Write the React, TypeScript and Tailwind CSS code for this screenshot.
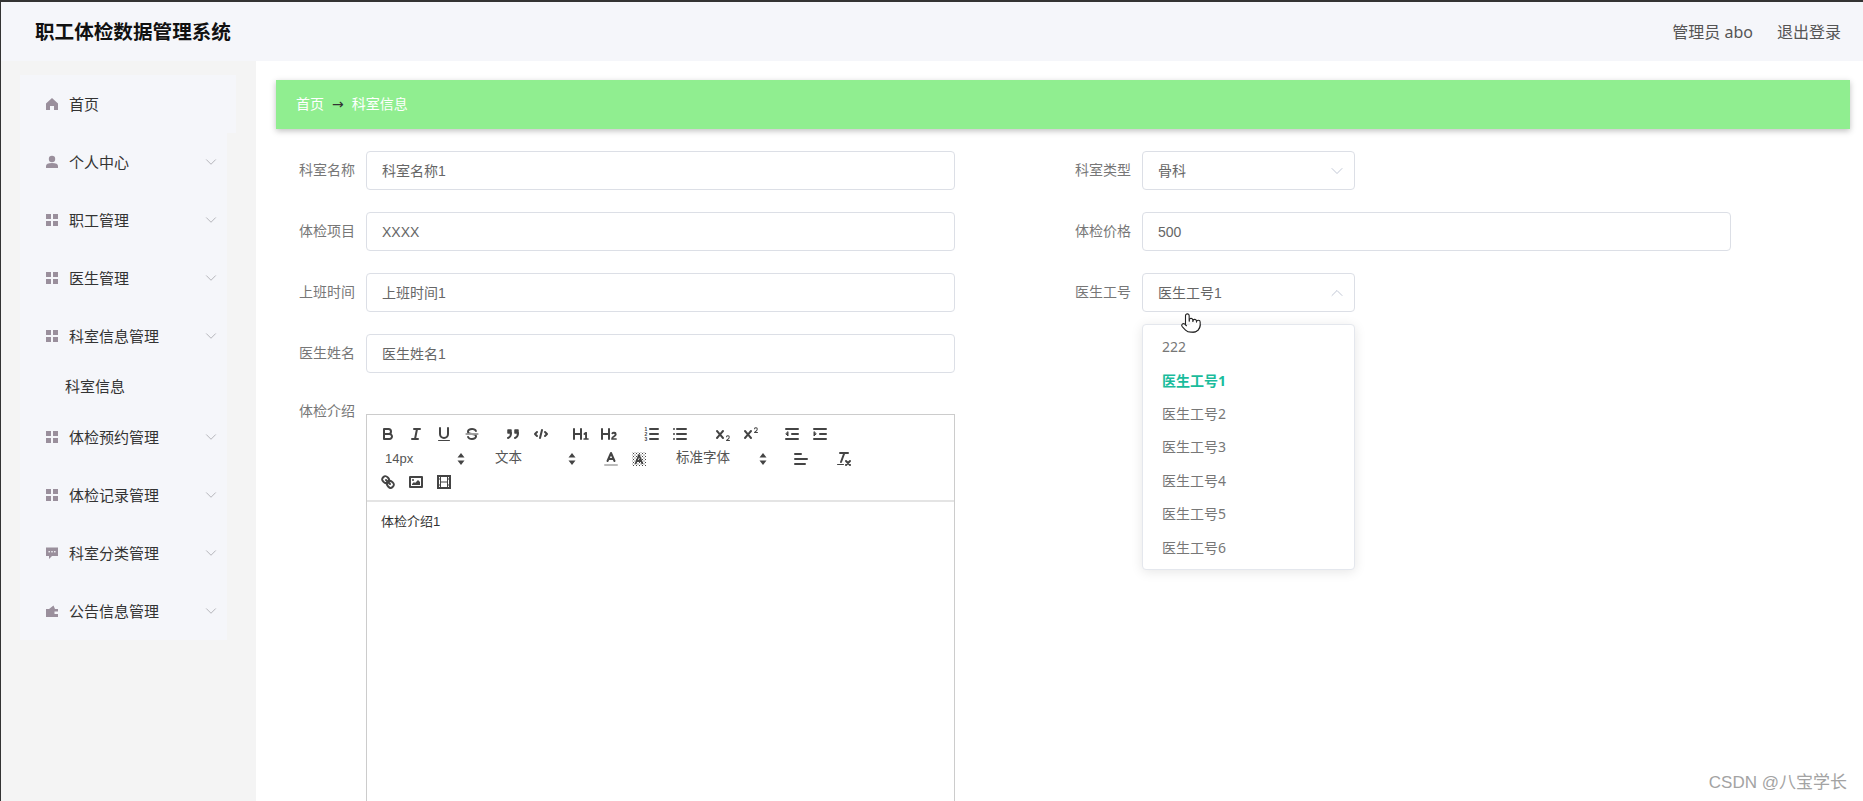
import type { ReactNode } from 'react'
import { ChevronDown, ChevronUp, Pointer } from 'lucide-react'

const FONT = "font-['Noto_Sans','Noto_Sans_CJK_SC',sans-serif]"
const FORM_FONT = "font-['Liberation_Sans','Noto_Sans_CJK_SC',sans-serif]"

const HomeIcon = () => (
  <svg width="14" height="14" viewBox="0 0 14 14" fill="#9a8f9c">
    <path d="M7 1 L13 6.5 V13 H9 V9 H5 V13 H1 V6.5 Z" />
  </svg>
)
const UserIcon = () => (
  <svg width="14" height="14" viewBox="0 0 14 14" fill="#9a8f9c">
    <circle cx="7" cy="4" r="3.2" />
    <path d="M1 13 V11 C1 9 3 8 7 8 C11 8 13 9 13 11 V13 Z" />
  </svg>
)
const GridIcon = () => (
  <svg width="14" height="14" viewBox="0 0 14 14" fill="#9a8f9c">
    <rect x="1" y="1" width="5" height="5" />
    <rect x="8" y="1" width="5" height="5" />
    <rect x="1" y="8" width="5" height="5" />
    <rect x="8" y="8" width="5" height="5" />
  </svg>
)
const ChatIcon = () => (
  <svg width="14" height="14" viewBox="0 0 14 14">
    <path d="M1 1.5 H13 V10 H7 L4 13 V10 H1 Z" fill="#9a8f9c" />
    <rect x="3.5" y="5" width="1.4" height="1.4" fill="#f5f6fa" />
    <rect x="6.3" y="5" width="1.4" height="1.4" fill="#f5f6fa" />
    <rect x="9.1" y="5" width="1.4" height="1.4" fill="#f5f6fa" />
  </svg>
)
const WalletIcon = () => (
  <svg width="14" height="14" viewBox="0 0 14 14">
    <path d="M1 5 H4 L8.5 1.5 L10 5 H13 V13 H1 Z" fill="#9a8f9c" />
    <rect x="9.5" y="7.5" width="3.5" height="2.5" fill="#f5f6fa" />
  </svg>
)

const menu = [
  { label: '个人中心', icon: <UserIcon /> },
  { label: '职工管理', icon: <GridIcon /> },
  { label: '医生管理', icon: <GridIcon /> },
  { label: '科室信息管理', icon: <GridIcon />, sub: '科室信息' },
  { label: '体检预约管理', icon: <GridIcon /> },
  { label: '体检记录管理', icon: <GridIcon /> },
  { label: '科室分类管理', icon: <ChatIcon /> },
  { label: '公告信息管理', icon: <WalletIcon /> },
]

const Sidebar = () => (
  <aside className="w-[255px] shrink-0 bg-[#f4f4f4] pl-[19px] pt-[14px]">
    <div className="w-[207px] bg-[#f5f6fa]">
      <div className="flex h-[58px] w-[216px] items-center gap-[10px] bg-[#f5f6fa] pl-[25px] text-[15px] text-[#333]">
        <HomeIcon />
        <span>首页</span>
      </div>
      {menu.map(item => (
        <div key={item.label}>
          <div className="flex h-[58px] items-center gap-[10px] pl-[25px] pr-[7px] text-[15px] text-[#333]">
            {item.icon}
            <span className="flex-1">{item.label}</span>
            <ChevronDown size={18} strokeWidth={1.1} color="#a6a6ad" />
          </div>
          {item.sub && <div className="flex h-[43px] items-center pl-[45px] text-[15px] text-[#333]">{item.sub}</div>}
        </div>
      ))}
    </div>
  </aside>
)

const Field = ({ label, value, width, arrow }: { label: string; value: string; width: string; arrow?: 'up' | 'down' }) => (
  <div className="flex h-[39px] items-center">
    <label className="w-[59px] shrink-0 pl-[3px] text-[14px] text-[#777]">{label}</label>
    <div className={`ml-[11px] flex h-[39px] items-center justify-between rounded-[4px] border border-[#dcdfe6] pl-[15px] pr-[7px] text-[14px] text-[#666] ${width}`}>
      <span className="pt-[1px]">{value}</span>
      {arrow === 'down' && <ChevronDown size={20} strokeWidth={1} color="#b4bccc" />}
      {arrow === 'up' && <ChevronUp size={20} strokeWidth={1} color="#b4bccc" />}
    </div>
  </div>
)

// editor toolbar icon, 28px wide slot with an 18x18 drawing
const ToolIcon = ({ children, className = '' }: { children: ReactNode; className?: string }) => (
  <span className={`flex h-[20px] w-[28px] shrink-0 items-center justify-center ${className}`}>
    <svg width="18" height="18" viewBox="0 0 18 18" fill="none" stroke="#444" strokeWidth="2" strokeLinecap="round" strokeLinejoin="round">
      {children}
    </svg>
  </span>
)

const Updown = () => (
  <svg width="8" height="12" viewBox="0 0 8 12" fill="#444">
    <path d="M4 0 L7.5 4.5 H0.5 Z M4 12 L0.5 7.5 H7.5 Z" />
  </svg>
)

const X_PATH = 'M9.65,5.241a1,1,0,0,0-1.409.108L6,7.964,3.759,5.349A1,1,0,0,0,2.241,6.651L4.684,9.5,2.241,12.35A1,1,0,0,0,3.759,13.65L6,11.036,8.241,13.65a1,1,0,1,0,1.518-1.3L7.316,9.5,9.759,6.651A1,1,0,0,0,9.65,5.241Z'

const Editor = () => (
  <div className="ml-[11px] h-[420px] w-[589px] border border-[#ccc]">
    <div className={`${FORM_FONT} h-[87px] border-b-2 border-[#e4e4e4] pl-[7px] pt-[7px]`}>
      <div className="flex h-[24px] items-center">
        <ToolIcon>
          <path d="M5,4H9.5A2.5,2.5,0,0,1,12,6.5v0A2.5,2.5,0,0,1,9.5,9H5V4Z" />
          <path d="M5,9h5.5A2.5,2.5,0,0,1,13,11.5v0A2.5,2.5,0,0,1,10.5,14H5V9Z" />
        </ToolIcon>
        <ToolIcon>
          <path d="M7 4H13M5 14H11M8 14L10 4" />
        </ToolIcon>
        <ToolIcon>
          <path d="M5,3V9a4,4,0,0,0,4,4h0a4,4,0,0,0,4-4V3" />
          <rect x="3" y="15" width="12" height="1" rx=".5" fill="#444" stroke="none" />
        </ToolIcon>
        <ToolIcon>
          <path d="M3 9H15" strokeWidth="1" />
          <path stroke="none" fill="#444" d="M9.007,8C6.542,7.791,6,7.519,6,6.5,6,5.792,7.283,5,9,5c1.571,0,2.765.679,2.969,1.309a1,1,0,0,0,1.9-.617C13.356,4.106,11.354,3,9,3,6.2,3,4,4.538,4,6.5a3.2,3.2,0,0,0,.5,1.843Z" />
          <path stroke="none" fill="#444" d="M8.984,10C11.457,10.208,12,10.479,12,11.5c0,.708-1.283,1.5-3,1.5-1.571,0-2.765-.679-2.969-1.309a1,1,0,1,0-1.9.617C4.644,13.894,6.646,15,9,15c2.8,0,5-1.538,5-3.5a3.2,3.2,0,0,0-.5-1.843Z" />
        </ToolIcon>
        <ToolIcon className="ml-[13px]">
          <rect x="4" y="5" width="3" height="3" fill="#444" strokeWidth="1.5" />
          <rect x="11" y="5" width="3" height="3" fill="#444" strokeWidth="1.5" />
          <path d="M7,8c0,4-3,5-3,5M14,8c0,4-3,5-3,5" />
        </ToolIcon>
        <ToolIcon>
          <path d="M5 7L3 9L5 11M13 7L15 9L13 11M10 5L8 13" />
        </ToolIcon>
        <ToolIcon className="ml-[12px]">
          <path stroke="none" fill="#444" d="M10,4V14a1,1,0,0,1-2,0V10H3v4a1,1,0,0,1-2,0V4a1,1,0,0,1,2,0V8H8V4a1,1,0,0,1,2,0Zm6.06787,9.209H14.98975V7.59863a.54085.54085,0,0,0-.605-.60547h-.62744a1.01119,1.01119,0,0,0-.748.29688L11.645,8.56641a.5435.5435,0,0,0-.022.8584l.28613.30762a.53861.53861,0,0,0,.84717.0332l.09912-.08789a1.2137,1.2137,0,0,0,.2417-.35254h.02246s-.01123.30859-.01123.60547V13.209H12.041a.54085.54085,0,0,0-.605.60547v.43945a.54085.54085,0,0,0,.605.60547h4.02686a.54085.54085,0,0,0,.605-.60547v-.43945A.54085.54085,0,0,0,16.06787,13.209Z" />
        </ToolIcon>
        <ToolIcon>
          <path stroke="none" fill="#444" d="M16.73975,13.81445v.43945a.54085.54085,0,0,1-.605.60547H11.855a.58392.58392,0,0,1-.64893-.60547V14.0127c0-2.90527,3.39941-3.42187,3.39941-4.55469a.77675.77675,0,0,0-.84717-.78125,1.17684,1.17684,0,0,0-.83594.38477c-.2749.26367-.561.374-.85791.13184l-.4292-.34082c-.30811-.24219-.38525-.51758-.1543-.81445a2.97155,2.97155,0,0,1,2.45361-1.17676,2.45393,2.45393,0,0,1,2.68408,2.40918c0,2.45312-3.1792,2.92676-3.27832,3.93848h2.79443A.54085.54085,0,0,1,16.73975,13.81445ZM9,3A.99974.99974,0,0,0,8,4V8H3V4A1,1,0,0,0,1,4V14a1,1,0,0,0,2,0V10H8v4a1,1,0,0,0,2,0V4A.99974.99974,0,0,0,9,3Z" />
        </ToolIcon>
        <ToolIcon className="ml-[15px]">
          <path d="M7 4H15M7 9H15M7 14H15" />
          <text x="1.5" y="6" fontSize="5" fill="#444" stroke="none" fontWeight="700">1</text>
          <text x="1.5" y="11" fontSize="5" fill="#444" stroke="none" fontWeight="700">2</text>
          <text x="1.5" y="16" fontSize="5" fill="#444" stroke="none" fontWeight="700">3</text>
        </ToolIcon>
        <ToolIcon>
          <path d="M6 4H15M6 9H15M6 14H15M3 4H3M3 9H3M3 14H3" />
        </ToolIcon>
        <ToolIcon className="ml-[15px]">
          <path stroke="none" fill="#444" d={X_PATH} />
          <path stroke="none" fill="#444" d="M15.5,15H13.861a3.858,3.858,0,0,0,1.914-2.975,1.8,1.8,0,0,0-1.6-1.751A1.921,1.921,0,0,0,12.021,11.7a.5.5,0,1,0,.957.291.914.914,0,0,1,1.053-.725.81.81,0,0,1,.744.762c0,1.076-1.17,1.87-1.94,2.431A1.456,1.456,0,0,0,12,15.5a.5.5,0,0,0,.5.5h3A.5.5,0,0,0,15.5,15Z" />
        </ToolIcon>
        <ToolIcon>
          <path stroke="none" fill="#444" d={X_PATH} />
          <path stroke="none" fill="#444" d="M15.5,7H13.861a4.015,4.015,0,0,0,1.914-2.975,1.8,1.8,0,0,0-1.6-1.751A1.922,1.922,0,0,0,12.021,3.7a.5.5,0,1,0,.957.291.917.917,0,0,1,1.053-.725.81.81,0,0,1,.744.762c0,1.077-1.164,1.925-1.934,2.486A1.423,1.423,0,0,0,12,7.5a.5.5,0,0,0,.5.5h3A.5.5,0,0,0,15.5,7Z" />
        </ToolIcon>
        <ToolIcon className="ml-[13px]">
          <path d="M3 14H15M3 4H15M9 9H15" />
          <path d="M5 7V11L3 9Z" fill="#444" strokeWidth="1" />
        </ToolIcon>
        <ToolIcon>
          <path d="M3 14H15M3 4H15M9 9H15" />
          <path d="M3 7V11L5 9Z" fill="#444" strokeWidth="1" />
        </ToolIcon>
      </div>
      <div className="flex h-[25px] items-center text-[13px] text-[#555]">
        <span className="flex w-[91px] items-center justify-between pl-[11px]">14px <Updown /></span>
        <span className="ml-[30px] flex w-[81px] items-center justify-between text-[13.5px]">文本 <Updown /></span>
        <ToolIcon className="ml-[21px]">
          <path d="M3 15H15" stroke="#bbb" />
          <path d="M5.5 11L9 3L12.5 11M11.6 9H6.4" />
        </ToolIcon>
        <ToolIcon>
          <defs>
            <pattern id="bg-hatch" width="3" height="3" patternUnits="userSpaceOnUse">
              <rect width="1" height="1" fill="#444" stroke="none" />
              <rect x="1.5" y="1.5" width="1" height="1" fill="#444" stroke="none" />
            </pattern>
          </defs>
          <rect x="2" y="2" width="14" height="14" fill="url(#bg-hatch)" stroke="none" />
          <path d="M5.5 14L9 5L12.5 14M11.6 11H6.4" strokeWidth="1.8" strokeLinecap="butt" />
        </ToolIcon>
        <span className="ml-[23px] flex w-[91px] items-center justify-between text-[13.5px]">标准字体 <Updown /></span>
        <ToolIcon className="ml-[20px]">
          <path d="M3 9H15M3 14H13M3 4H9" />
        </ToolIcon>
        <ToolIcon className="ml-[15px]">
          <path d="M5 3H13M6 12L9.35 3M11 11L15 15M15 11L11 15" />
          <rect x="2" y="14" width="7" height="1" rx=".5" fill="#444" stroke="none" />
        </ToolIcon>
      </div>
      <div className="flex h-[21px] items-center">
        <ToolIcon>
          <path d="M7 7L11 11" />
          <path d="M8.9,4.577a3.476,3.476,0,0,1,.36,4.679A3.476,3.476,0,0,1,4.577,8.9C3.185,7.5,2.035,6.4,4.217,4.217S7.5,3.185,8.9,4.577Z" />
          <path d="M13.423,9.1a3.476,3.476,0,0,0-4.679-.36,3.476,3.476,0,0,0,.36,4.679c1.392,1.392,2.5,2.542,4.679.36S14.815,10.5,13.423,9.1Z" />
        </ToolIcon>
        <ToolIcon>
          <rect x="3" y="4" width="12" height="10" />
          <circle cx="6" cy="7" r="1" fill="#444" stroke="none" />
          <path d="M5 12V11L7 9L8 10L11 7L13 9V12Z" fill="#444" stroke="none" />
        </ToolIcon>
        <ToolIcon>
          <rect x="3" y="3" width="12" height="12" strokeLinejoin="miter" />
          <path d="M5.5 3V15M12.5 3V15M5 9H13M3 6H5M3 12H5M13 6H15M13 12H15" strokeWidth="1" strokeLinecap="butt" />
        </ToolIcon>
      </div>
    </div>
    <div className="px-[14px] pt-[10px] text-[13px] text-[#333]">体检介绍1</div>
  </div>
)

const options = ['222', '医生工号1', '医生工号2', '医生工号3', '医生工号4', '医生工号5', '医生工号6']

const Dropdown = () => (
  <div className={`${FONT} absolute left-[70px] top-[51px] z-10 w-[213px] rounded-[4px] border border-[#e4e7ed] bg-white py-[5px] shadow-[0_2px_12px_rgba(0,0,0,0.1)]`}>
    {options.map((o, i) => (
      <div
        key={o}
        className={`flex h-[33.4px] items-center pl-[19px] text-[14px] ${i === 1 ? 'font-bold text-[#1abc9c]' : 'text-[#777]'}`}
      >
        {o}
      </div>
    ))}
  </div>
)

export default function App() {
  return (
    <div className={`${FONT} relative flex h-[801px] w-[1863px] flex-col overflow-hidden border-l border-[#333] border-t-2 border-t-[#333] bg-white`}>
      <span className="absolute -top-[2px] left-[1823px] h-[2px] w-[16px] rounded-b-full bg-[#ddd]" />
      <header className="flex h-[59px] shrink-0 items-center justify-between bg-[#f5f6fa] pl-[34px] pr-[22px]">
        <h1 className="text-[19.6px] font-bold text-[#111]">职工体检数据管理系统</h1>
        <div className="flex items-center gap-[24px] text-[16px] text-[#555]">
          <span>管理员 abo</span>
          <span>退出登录</span>
        </div>
      </header>
      <div className="flex flex-1 overflow-hidden">
        <Sidebar />
        <main className={`${FORM_FONT} flex-1 pl-[20px] pr-[13px] pt-[19px]`}>
          <div className="flex h-[49px] items-center gap-[8px] bg-[#90ee90] pl-[20px] text-[14px] text-white shadow-[0_2px_6px_rgba(0,0,0,0.25)]">
            <span>首页</span>
            <span className="font-['DejaVu_Sans',sans-serif] text-[#333]">→</span>
            <span>科室信息</span>
          </div>
          <div className="mt-[22px] flex pl-[20px]">
            <div className="flex w-[776px] flex-col gap-[22px]">
              <Field label="科室名称" value="科室名称1" width="w-[589px]" />
              <Field label="体检项目" value="XXXX" width="w-[589px]" />
              <Field label="上班时间" value="上班时间1" width="w-[589px]" />
              <Field label="医生姓名" value="医生姓名1" width="w-[589px]" />
              <div className="mt-[19px] flex">
                <label className="-mt-[13px] w-[59px] shrink-0 pl-[3px] text-[14px] text-[#777]">体检介绍</label>
                <Editor />
              </div>
            </div>
            <div className="flex flex-col gap-[22px]">
              <Field label="科室类型" value="骨科" width="w-[213px]" arrow="down" />
              <Field label="体检价格" value="500" width="w-[589px]" />
              <div className="relative">
                <Field label="医生工号" value="医生工号1" width="w-[213px]" arrow="up" />
                <Dropdown />
                <Pointer className="absolute left-[108px] top-[39px] z-20" size={22} strokeWidth={1.2} color="#222" fill="#fff" />
              </div>
            </div>
          </div>
        </main>
      </div>
      <span className="absolute bottom-[6px] right-[16px] font-['Liberation_Sans','Noto_Sans_CJK_SC',sans-serif] text-[17px] text-[#a3a3a3]">CSDN @八宝学长</span>
    </div>
  )
}
